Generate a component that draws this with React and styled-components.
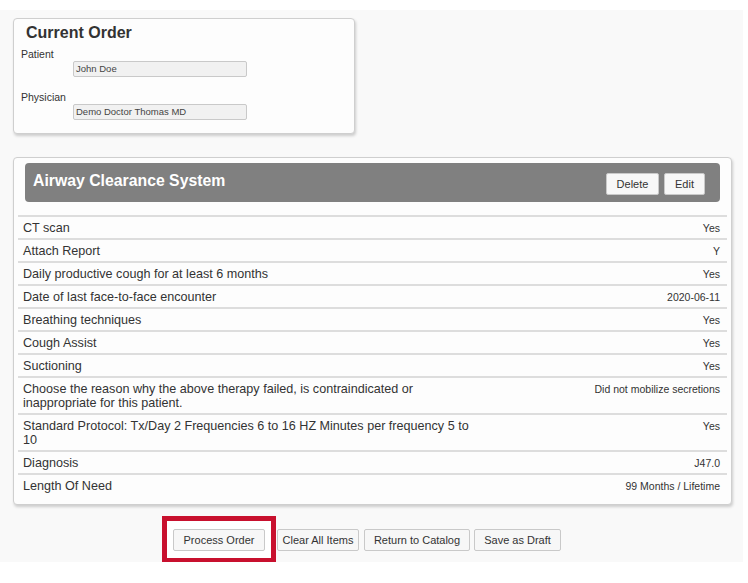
import React from "react";
import styled, { createGlobalStyle } from "styled-components";

const GlobalStyle = createGlobalStyle`
  body {
    margin: 0;
    background: #ffffff;
    font-family: "Liberation Sans", Arial, sans-serif;
    color: #333333;
  }
`;

const Page = styled.div`
  margin-top: 10px;
  width: 743px;
  height: 552px;
  background: #f9f9f9;
  padding: 8px 0 0 13px;
  box-sizing: border-box;
`;

const Card = styled.div`
  width: ${(p) => p.width}px;
  box-sizing: border-box;
  background: #fdfdfd;
  border: 1px solid #cfcfcf;
  border-radius: 4px;
  box-shadow: 1px 2px 3px rgba(0, 0, 0, 0.18);
`;

const OrderCard = styled(Card)`
  padding: 4px 7px 13px 7px;
`;

const Title = styled.h2`
  margin: 0 0 0 5px;
  font-size: 16px;
  line-height: 20px;
  font-weight: bold;
  color: #333;
`;

const FieldLabel = styled.div`
  font-size: 10.5px;
  line-height: 14px;
  margin-top: ${(p) => p.gap}px;
`;

const FieldValue = styled.div`
  margin-left: 52px;
  width: 174px;
  height: 16px;
  box-sizing: border-box;
  background: #f1f1f1;
  border: 1px solid #c9c9c9;
  border-radius: 2px;
  font-size: 9.5px;
  line-height: 14px;
  padding-left: 2px;
  color: #444;
`;

const ItemCard = styled(Card)`
  margin-top: 23px;
  padding: 5px 4px 8px 4px;
`;

const HeaderBar = styled.div`
  margin: 0 7px 13px 7px;
  height: 39px;
  background: #808080;
  border-radius: 4px;
  display: flex;
  align-items: center;
  padding: 0 15px 0 8px;
`;

const HeaderTitle = styled.div`
  flex: 1;
  color: #ffffff;
  font-size: 15.8px;
  font-weight: bold;
  margin-top: -4px;
`;

const Button = styled.button`
  font-family: "Liberation Sans", Arial, sans-serif;
  font-size: 11px;
  color: #333;
  height: 22px;
  padding: 0;
  width: ${(p) => p.w}px;
  background: #f7f7f7;
  border: 1px solid #c9c9c9;
  border-radius: 2px;
  margin-left: ${(p) => p.ml || 0}px;
`;

const HeaderButton = styled(Button)`
  margin-top: 2px;
`;

const Row = styled.div`
  display: flex;
  align-items: flex-start;
  border-top: 2px solid #dddddd;
  padding: 4px 7px 3px 5px;
`;

const RowLabel = styled.div`
  max-width: 455px;
  font-size: 12.6px;
  line-height: 14px;
  color: #333;
`;

const RowValue = styled.div`
  margin-left: auto;
  font-size: 10.5px;
  line-height: 14px;
  color: #333;
  white-space: nowrap;
`;

const Footer = styled.div`
  display: flex;
  align-items: center;
  margin-top: 11px;
  padding-left: 149px;
`;

const Highlight = styled.div`
  border: 5px solid #c8102e;
  background: #ffffff;
  padding: 8px 6px 7px 6px;
`;

const rows = [
  ["CT scan", "Yes"],
  ["Attach Report", "Y"],
  ["Daily productive cough for at least 6 months", "Yes"],
  ["Date of last face-to-face encounter", "2020-06-11"],
  ["Breathing techniques", "Yes"],
  ["Cough Assist", "Yes"],
  ["Suctioning", "Yes"],
  [
    "Choose the reason why the above therapy failed, is contraindicated or inappropriate for this patient.",
    "Did not mobilize secretions",
  ],
  [
    "Standard Protocol: Tx/Day 2 Frequencies 6 to 16 HZ Minutes per frequency 5 to 10",
    "Yes",
  ],
  ["Diagnosis", "J47.0"],
  ["Length Of Need", "99 Months / Lifetime"],
];

export default function App() {
  return (
    <>
      <GlobalStyle />
      <Page>
        <OrderCard width={342}>
          <Title>Current Order</Title>
          <FieldLabel gap={4}>Patient</FieldLabel>
          <FieldValue>John Doe</FieldValue>
          <FieldLabel gap={13}>Physician</FieldLabel>
          <FieldValue>Demo Doctor Thomas MD</FieldValue>
        </OrderCard>

        <ItemCard width={719}>
          <HeaderBar>
            <HeaderTitle>Airway Clearance System</HeaderTitle>
            <HeaderButton w={53}>Delete</HeaderButton>
            <HeaderButton w={41} ml={5}>
              Edit
            </HeaderButton>
          </HeaderBar>
          {rows.map(([label, value]) => (
            <Row key={label}>
              <RowLabel>{label}</RowLabel>
              <RowValue>{value}</RowValue>
            </Row>
          ))}
        </ItemCard>

        <Footer>
          <Highlight>
            <Button w={92}>Process Order</Button>
          </Highlight>
          <Button w={82} ml={1}>
            Clear All Items
          </Button>
          <Button w={106} ml={5}>
            Return to Catalog
          </Button>
          <Button w={87} ml={4}>
            Save as Draft
          </Button>
        </Footer>
      </Page>
    </>
  );
}
